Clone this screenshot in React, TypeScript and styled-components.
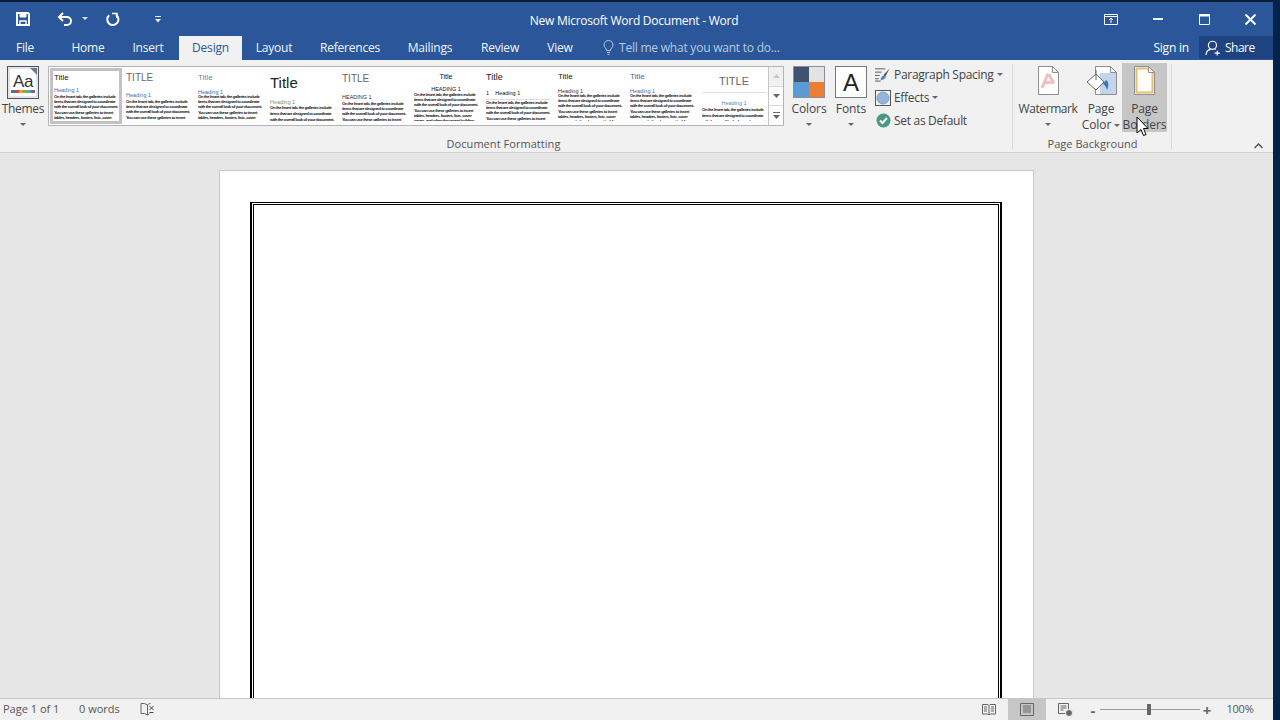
import styled, { createGlobalStyle } from 'styled-components';

const GlobalStyle = createGlobalStyle`
  html, body { margin: 0; padding: 0; background: #04234a; }
  body { font-family: "Open Sans", "Noto Sans", sans-serif; overflow: hidden; }
`;

const Desktop = styled.div`
  width: 1280px;
  height: 720px;
  display: flex;
  overflow: hidden;
  position: relative;
  background: #04234a;
`;

const Window = styled.div`
  width: 1273px;
  height: 720px;
  display: flex;
  flex-direction: column;
  border-top: 2px solid #0b1c38;
  box-sizing: border-box;
`;

const TitleBar = styled.div`
  height: 34px;
  flex: none;
  background: #2b579a;
  display: flex;
  align-items: center;
  color: #fff;
  position: relative;
`;

const Qat = styled.div`
  display: flex;
  align-items: center;
  box-sizing: border-box;
  padding-left: 15px;
  height: 100%;
  width: 500px;
`;

const QatSlot = styled.span<{ $w: number }>`
  display: flex;
  align-items: center;
  width: ${p => p.$w}px;
`;

const DocTitle = styled.div`
  flex: none;
  width: 268px;
  text-align: center;
  font-size: 12px;
  letter-spacing: -0.25px;
  margin-top: 3px;
`;

const WinControls = styled.div`
  margin-left: auto;
  display: flex;
  align-items: center;
  height: 100%;
`;

const WinSlot = styled.span<{ $w: number }>`
  width: ${p => p.$w}px;
  display: flex;
  justify-content: center;
`;

const TabBar = styled.div`
  height: 24px;
  flex: none;
  background: #2b579a;
  display: flex;
  align-items: stretch;
  color: #fff;
  font-size: 12px;
`;

const Tab = styled.div<{ $active?: boolean; $w: number; $ml?: number }>`
  width: ${p => p.$w}px;
  margin-left: ${p => p.$ml ?? 0}px;
  padding-bottom: 1px;
  box-sizing: border-box;
  display: flex;
  justify-content: center;
  align-items: center;
  letter-spacing: -0.2px;
  background: ${p => (p.$active ? '#f1f1f1' : 'transparent')};
  color: ${p => (p.$active ? '#2b579a' : '#f2f5fa')};
`;

const TellMe = styled.div`
  display: flex;
  align-items: center;
  gap: 5px;
  margin-left: 18px;
  padding-bottom: 1px;
  color: #b7c9e3;
  font-size: 12px;
  letter-spacing: -0.22px;
`;

const SignIn = styled.div`
  margin-left: auto;
  display: flex;
  align-items: center;
  margin-right: 10px;
  padding-bottom: 1px;
  letter-spacing: -0.2px;
`;

const ShareButton = styled.div`
  width: 74px;
  box-sizing: border-box;
  padding-left: 6px;
  display: flex;
  align-items: center;
  gap: 4px;
  background: #1e4380;
  letter-spacing: -0.5px;
  margin-bottom: 1px;
`;

const Ribbon = styled.div`
  height: 93px;
  flex: none;
  background: #f1f1f1;
  border-bottom: 1px solid #d0d0d0;
  box-sizing: border-box;
  display: flex;
  color: #444;
  font-size: 12px;
`;

const Group = styled.div<{ $w: number }>`
  width: ${p => p.$w}px;
  flex: none;
  display: flex;
  flex-direction: column;
  position: relative;
  &::after {
    content: '';
    position: absolute;
    right: 0;
    top: 4px;
    bottom: 3px;
    width: 1px;
    background: #dadada;
  }
`;

const GroupBody = styled.div`
  height: 76px;
  display: flex;
  flex: none;
`;

const GroupLabel = styled.div<{ $pr?: number }>`
  text-align: center;
  font-size: 11px;
  color: #555;
  padding-right: ${p => p.$pr ?? 0}px;
  letter-spacing: 0.05px;
  line-height: 15px;
`;

const Large = styled.div<{ $w: number; $ml?: number; $hot?: boolean; $ls?: number }>`
  width: ${p => p.$w}px;
  margin-left: ${p => p.$ml ?? 0}px;
  margin-top: 3px;
  height: 69px;
  flex: none;
  display: flex;
  flex-direction: column;
  align-items: center;
  background: ${p => (p.$hot ? '#c6c6c6' : 'transparent')};
  line-height: 16px;
  text-align: center;
  white-space: nowrap;
  letter-spacing: ${p => p.$ls ?? -0.1}px;
`;

const IconBox = styled.div`
  height: 35px;
  margin-top: 3px;
  display: flex;
  align-items: flex-start;
  justify-content: center;
  flex: none;
`;

const Caret = styled.span`
  display: inline-block;
  width: 0;
  height: 0;
  border-left: 3px solid transparent;
  border-right: 3px solid transparent;
  border-top: 3px solid #666;
  vertical-align: middle;
`;

const CaretRow = styled.div`
  height: 16px;
  display: flex;
  align-items: center;
  justify-content: center;
`;

const Gallery = styled.div`
  width: 736px;
  height: 60px;
  margin: 6px 0 0 2px;
  flex: none;
  display: flex;
  background: #fff;
  border: 1px solid #b4b4b4;
  box-sizing: border-box;
`;

const Thumbs = styled.div`
  display: flex;
  flex: 1;
  padding-left: 1px;
  overflow: hidden;
`;

const Thumb = styled.div<{ $selected?: boolean; $top: number; $align: string }>`
  width: 72px;
  flex: none;
  height: 56px;
  margin-top: 1px;
  box-sizing: border-box;
  border: 3px solid ${p => (p.$selected ? '#c2c2c2' : 'transparent')};
  padding: ${p => p.$top}px 1px 0 1px;
  overflow: hidden;
  color: #222;
  text-align: ${p => p.$align};
`;

const ThumbTitle = styled.div<{ $size: number; $color: string; $h: number }>`
  font-family: "Liberation Sans", sans-serif;
  font-size: ${p => p.$size}px;
  color: ${p => p.$color};
  height: ${p => p.$h}px;
  line-height: ${p => p.$size + 2}px;
`;

const ThumbHeading = styled.div<{ $color: string; $h: number; $rule?: 'top' | 'bottom' }>`
  font-family: "Liberation Sans", sans-serif;
  font-size: 5.5px;
  color: ${p => p.$color};
  height: ${p => p.$h}px;
  line-height: 6px;
  box-sizing: border-box;
  white-space: pre;
  ${p => p.$rule === 'top' && 'border-top: 1px solid #ddd; padding-top: 7px;'}
  ${p => p.$rule === 'bottom' && 'border-bottom: 1px solid #ddd;'}
`;

const ThumbBody = styled.div<{ $lh?: number }>`
  font-family: "Liberation Sans", sans-serif;
  font-size: 4.2px;
  font-weight: 700;
  letter-spacing: -0.36px;
  line-height: ${p => p.$lh ?? 5.2}px;
  color: #111;
  text-align: left;
`;

const Scroller = styled.div`
  width: 14px;
  flex: none;
  display: flex;
  flex-direction: column;
  border-left: 1px solid #c6c6c6;
`;

const ScrollBtn = styled.div<{ $off?: boolean }>`
  flex: 1;
  display: flex;
  align-items: center;
  justify-content: center;
  background: ${p => (p.$off ? '#f1f1f1' : '#fff')};
  & + & { border-top: 1px solid #d8d8d8; }
`;

const SmallStack = styled.div`
  margin: 0 0 0 3px;
  padding-top: 3px;
  display: flex;
  flex-direction: column;
  flex: none;
`;

const SmallBtn = styled.div`
  height: 23px;
  display: flex;
  align-items: center;
  gap: 3px;
  white-space: nowrap;
  letter-spacing: -0.3px;
`;

const SmallIcon = styled.span`
  width: 16px;
  display: flex;
  justify-content: center;
`;

const Collapse = styled.div`
  margin-left: auto;
  align-self: flex-end;
  margin-right: 10px;
  margin-bottom: 3px;
  display: flex;
`;

const Workspace = styled.div`
  flex: 1;
  min-height: 0;
  background: #e6e6e6;
  overflow: hidden;
  padding: 17px 20px 0 0;
  display: flex;
  justify-content: center;
  box-sizing: border-box;
`;

const Page = styled.div`
  width: 815px;
  height: 800px;
  flex: none;
  box-sizing: border-box;
  background: #fff;
  border: 1px solid #c9c9c9;
  padding: 31px 31px 0 30px;
`;

const BorderOuter = styled.div`
  height: 100%;
  box-sizing: border-box;
  border-style: solid;
  border-color: #000;
  border-width: 1px 2px;
  padding: 1px;
`;

const BorderInner = styled.div`
  height: 100%;
  box-sizing: border-box;
  border: 1px solid #000;
`;

const StatusBar = styled.div`
  height: 22px;
  flex: none;
  box-sizing: border-box;
  background: #f1f1f1;
  border-top: 1px solid #c6c6c6;
  display: flex;
  align-items: stretch;
  color: #555;
  font-size: 11px;
`;

const StatusText = styled.div<{ $w: number; $ml?: number }>`
  width: ${p => p.$w}px;
  margin-left: ${p => p.$ml ?? 0}px;
  display: flex;
  align-items: center;
  white-space: nowrap;
  padding-bottom: 2px;
`;

const StatusRight = styled.div`
  margin-left: auto;
  display: flex;
  align-items: stretch;
`;

const ViewBtn = styled.div<{ $active?: boolean }>`
  width: 38px;
  display: flex;
  align-items: center;
  justify-content: center;
  background: ${p => (p.$active ? '#c6c6c6' : 'transparent')};
`;

const Zoom = styled.div`
  display: flex;
  align-items: center;
  margin-left: 2px;
`;

const ZoomSign = styled.span`
  width: 14px;
  text-align: center;
  font-size: 15px;
  font-weight: 700;
  color: #666;
  line-height: 14px;
`;

const Slider = styled.div`
  width: 100px;
  height: 1px;
  background: #9a9a9a;
  position: relative;
`;

const SliderThumb = styled.span`
  position: absolute;
  left: 47px;
  top: -5px;
  width: 4px;
  height: 11px;
  background: #666;
`;

const ZoomValue = styled.div`
  width: 52px;
  text-align: center;
  letter-spacing: -0.2px;
  margin-right: 7px;
  padding-bottom: 2px;
`;

const Cursor = styled.svg`
  position: absolute;
  left: 1136px;
  top: 116px;
`;

const BODY =
  'On the Insert tab, the galleries include items that are designed to coordinate with the overall look of your document. You can use these galleries to insert tables, headers, footers, lists, cover pages, and other document building blocks.';

type ThumbDef = {
  title: string;
  size: number;
  color: string;
  top: number;
  titleH: number;
  heading: string;
  headColor: string;
  headH: number;
  align?: string;
  rule?: 'top' | 'bottom';
  bodyLh?: number;
};

const thumbs: ThumbDef[] = [
  { title: 'Title', size: 8, color: '#222', top: 2, titleH: 14, heading: 'Heading 1', headColor: '#3a6fb0', headH: 7 },
  { title: 'TITLE', size: 10, color: '#666', top: 1, titleH: 20, heading: 'Heading 1', headColor: '#3a6fb0', headH: 7 },
  { title: 'Title', size: 8, color: '#6f8fb5', top: 2, titleH: 16, heading: 'Heading 1', headColor: '#3a6fb0', headH: 5 },
  { title: 'Title', size: 15, color: '#222', top: 3, titleH: 25, heading: 'Heading 1', headColor: '#6f9a6a', headH: 6, bodyLh: 5.8 },
  { title: 'TITLE', size: 10, color: '#666', top: 2, titleH: 21, heading: 'HEADING 1', headColor: '#333', headH: 7 },
  { title: 'Title', size: 7, color: '#111', top: 1, titleH: 14, heading: 'HEADING 1', headColor: '#111', headH: 6, align: 'center' },
  { title: 'Title', size: 9, color: '#222', top: 1, titleH: 18, heading: '1    Heading 1', headColor: '#111', headH: 10, rule: 'bottom' },
  { title: 'Title', size: 8, color: '#222', top: 1, titleH: 16, heading: 'Heading 1', headColor: '#333', headH: 5 },
  { title: 'Title', size: 8, color: '#3a6fb0', top: 1, titleH: 16, heading: 'Heading 1', headColor: '#3a6fb0', headH: 5 },
  { title: 'TITLE', size: 11, color: '#666', top: 4, titleH: 17, heading: 'Heading 1', headColor: '#5b86b8', headH: 15, align: 'center', rule: 'top', bodyLh: 5.8 },
];

function SaveIcon() {
  return (
    <svg width="16" height="16" viewBox="0 0 16 16" fill="none" stroke="#fff" strokeWidth="2">
      <path d="M2 2h11l1 1v11H2z" />
      <path d="M5 2v4h6V2" strokeWidth="1" fill="#fff" />
      <path d="M5 14v-4h6v4" strokeWidth="1.4" />
    </svg>
  );
}

function UndoIcon() {
  return (
    <svg width="16" height="14" viewBox="0 0 16 14" fill="none" stroke="#fff" strokeWidth="2">
      <path d="M6 1L2 5l4 4" />
      <path d="M2 5h8a3.6 3.6 0 0 1 0 8H7" />
    </svg>
  );
}

function RedoIcon() {
  return (
    <svg width="15" height="15" viewBox="0 0 15 15" fill="none" stroke="#fff" strokeWidth="2">
      <path d="M3.2 3.2A5.6 5.6 0 1 0 10 2.800" />
      <path d="M6 1.500h5v4.500" strokeWidth="1.600" />
    </svg>
  );
}

function WhiteCaret() {
  return (
    <svg width="6" height="4" viewBox="0 0 6 4">
      <path d="M0 0h6L3 3z" fill="#dfe7f3" />
    </svg>
  );
}

function CustomizeIcon() {
  return (
    <svg width="6" height="7" viewBox="0 0 6 7" fill="#e6ecf6">
      <rect x="0" y="0" width="6" height="1" />
      <path d="M0 3h6L3 6.500z" />
    </svg>
  );
}

function Bulb() {
  return (
    <svg width="11" height="15" viewBox="0 0 11 15" fill="none" stroke="#b7c9e3" strokeWidth="1">
      <path d="M3.500 10.500C3.500 8 1 7.500 1 5a4.500 4.500 0 0 1 9 0c0 2.500-2.500 3-2.500 5.500z" />
      <path d="M4 12.500h3M4.500 14.500h2" />
    </svg>
  );
}

function ThemesIcon() {
  return (
    <svg width="32" height="33" viewBox="0 0 32 33">
      <rect x="0.5" y="0.5" width="31" height="32" fill="#fff" stroke="#4a5560" />
      <rect x="2" y="2" width="28" height="29" fill="#fff" stroke="#c5ccd4" />
      <path d="M23 2h7v7z" fill="#6d7a88" />
      <text x="16" y="21" textAnchor="middle" fontFamily="Liberation Sans" fontSize="17" fill="#333">Aa</text>
      <rect x="4" y="24" width="4" height="3" fill="#4f6f9f" />
      <rect x="8" y="24" width="4" height="3" fill="#c0504d" />
      <rect x="12" y="24" width="4" height="3" fill="#e0a030" />
      <rect x="16" y="24" width="4" height="3" fill="#88a84a" />
      <rect x="20" y="24" width="4" height="3" fill="#5aa0c0" />
      <rect x="24" y="24" width="4" height="3" fill="#7a5fa0" />
    </svg>
  );
}

function ColorsIcon() {
  return (
    <svg width="32" height="32" viewBox="0 0 32 32">
      <rect x="0" y="0" width="16" height="16" fill="#3f5371" />
      <rect x="16" y="0" width="16" height="16" fill="#e3e3e3" />
      <rect x="0" y="16" width="16" height="16" fill="#5a9bd5" />
      <rect x="16" y="16" width="16" height="16" fill="#ed7d31" />
      <rect x="0.5" y="0.5" width="31" height="31" fill="none" stroke="#8a8f96" />
    </svg>
  );
}

function FontsIcon() {
  return (
    <svg width="32" height="32" viewBox="0 0 32 32">
      <rect x="0.5" y="0.5" width="31" height="31" fill="#fff" stroke="#777" />
      <text x="16" y="25" textAnchor="middle" fontFamily="Liberation Sans" fontSize="24" fill="#222">A</text>
    </svg>
  );
}

function ParaIcon() {
  return (
    <svg width="17" height="15" viewBox="0 0 17 15" fill="none">
      <path d="M0 1.500h11M0 5h7M0 8.500h5M0 12h4M0 14.500h6" stroke="#555" />
      <path d="M15.500 1L9 8l2 2z" fill="#555" />
      <path d="M9 8.500c-2 .5-3 2.500-3 5 2.500 0 5-1 5.500-3.500z" fill="#4d86c0" />
    </svg>
  );
}

function EffectsIcon() {
  return (
    <svg width="16" height="16" viewBox="0 0 16 16">
      <rect x="0.5" y="0.5" width="15" height="15" fill="#f4f4f4" stroke="#555" />
      <circle cx="8" cy="8" r="6" fill="#94b6de" stroke="#7c9cc5" />
    </svg>
  );
}

function DefaultIcon() {
  return (
    <svg width="15" height="15" viewBox="0 0 15 15">
      <circle cx="7.500" cy="7.500" r="7" fill="#4a9a83" />
      <path d="M4 7.500l2.500 2.500L11 5" fill="none" stroke="#fff" strokeWidth="2" />
    </svg>
  );
}

function Sheet({ children }: { children?: React.ReactNode }) {
  return (
    <svg width="21" height="29" viewBox="0 0 21 29">
      <path d="M.5.500h14l6 6v22H.5z" fill="#fff" stroke="#8e8e8e" />
      {children}
      <path d="M14.500.500v6h6z" fill="#f4f4f4" stroke="#8e8e8e" />
    </svg>
  );
}

function WatermarkIcon() {
  return (
    <Sheet>
      <path d="M4 22L9.500 9l2 .5 4.500 8M6.500 17l8-1" fill="none" stroke="#efc0c0" strokeWidth="3" />
    </Sheet>
  );
}

function PageColorIcon() {
  return (
    <svg width="31" height="29" viewBox="0 0 31 29">
      <path d="M9.500.500h15l6 6v22h-21z" fill="#fff" stroke="#8e8e8e" />
      <rect x="14" y="7" width="16" height="21" fill="#c3d5ea" />
      <path d="M24.500.500v6h6z" fill="#f4f4f4" stroke="#8e8e8e" />
      <path d="M1 16l9-8 8 8-8 8z" fill="#fff" stroke="#666" />
      <path d="M10 4v10" stroke="#666" />
      <path d="M20 14c3 2 3 6 1 10-1-3-2-5-4-6z" fill="#3d78b5" />
    </svg>
  );
}

function PageBordersIcon() {
  return (
    <Sheet>
      <path d="M2.500 2.500h11.500l4.500 4.500v19.500H2.500z" fill="#fffdf6" stroke="#e3c078" strokeWidth="2" />
    </Sheet>
  );
}

function ReadIcon() {
  return (
    <svg width="14" height="13" viewBox="0 0 14 13" fill="none" stroke="#666">
      <path d="M.5 1.500h5.500l1 1 1-1h5.500v9.500H8l-1 1-1-1H.5zM7 2.500v9" />
      <path d="M2 4h3M2 6h3M2 8h3M9 4h3M9 6h3M9 8h3" />
    </svg>
  );
}

function PrintIcon() {
  return (
    <svg width="14" height="13" viewBox="0 0 14 13" fill="none" stroke="#666">
      <path d="M.5.500h13v12H.5z" />
      <path d="M3 3h8M3 5h8M3 7h8M3 9h8" />
    </svg>
  );
}

function WebIcon() {
  return (
    <svg width="15" height="14" viewBox="0 0 15 14" fill="none" stroke="#666">
      <path d="M.5.500h10v10H.5z" />
      <path d="M2.500 3h6M2.500 5h6M2.500 7h3" />
      <circle cx="11" cy="10" r="3.500" fill="#666" stroke="#f1f1f1" />
    </svg>
  );
}

function ProofIcon() {
  return (
    <svg width="15" height="14" viewBox="0 0 15 14" fill="none" stroke="#666">
      <path d="M1 1.500h3.500l3 1.500v10l-3-1.500H1z" />
      <path d="M7.500 3c1-1 2-1.500 3-1.500M7.500 13l2-1.500" />
      <path d="M9.500 4l4 4M13.500 4l-4 4M9.500 10.500h4" stroke="#444" />
    </svg>
  );
}

export default function App() {
  return (
    <Desktop>
      <GlobalStyle />
      <Window>
        <TitleBar>
          <Qat>
            <QatSlot $w={42}><SaveIcon /></QatSlot>
            <QatSlot $w={25}><UndoIcon /></QatSlot>
            <QatSlot $w={24}><WhiteCaret /></QatSlot>
            <QatSlot $w={49}><RedoIcon /></QatSlot>
            <QatSlot $w={10}><CustomizeIcon /></QatSlot>
          </Qat>
          <DocTitle>New Microsoft Word Document - Word</DocTitle>
          <WinControls>
            <WinSlot $w={46}>
              <svg width="14" height="11" viewBox="0 0 14 11" fill="none" stroke="#fff">
                <path d="M.5.500h13v10H.5zM.5 2.500h13M7 9V4.500M5 6l2-2 2 2" />
              </svg>
            </WinSlot>
            <WinSlot $w={47}>
              <svg width="10" height="2" viewBox="0 0 10 2"><rect width="10" height="2" fill="#fff" /></svg>
            </WinSlot>
            <WinSlot $w={46}>
              <svg width="11" height="11" viewBox="0 0 11 11" fill="none" stroke="#fff">
                <path d="M.5.500h10v10H.5z" /><path d="M0 1.500h11" strokeWidth="2" />
              </svg>
            </WinSlot>
            <WinSlot $w={46}>
              <svg width="11" height="11" viewBox="0 0 11 11" fill="none" stroke="#fff" strokeWidth="2">
                <path d="M.5.500l10 10M10.500.500l-10 10" />
              </svg>
            </WinSlot>
          </WinControls>
        </TitleBar>
        <TabBar>
          <Tab $w={50}>File</Tab>
          <Tab $w={50} $ml={13}>Home</Tab>
          <Tab $w={50} $ml={10}>Insert</Tab>
          <Tab $w={63} $ml={6} $active>Design</Tab>
          <Tab $w={50} $ml={7}>Layout</Tab>
          <Tab $w={80} $ml={11}>References</Tab>
          <Tab $w={70} $ml={5}>Mailings</Tab>
          <Tab $w={50} $ml={10}>Review</Tab>
          <Tab $w={50} $ml={10}>View</Tab>
          <TellMe><Bulb />Tell me what you want to do...</TellMe>
          <SignIn>Sign in</SignIn>
          <ShareButton>
            <svg width="16" height="16" viewBox="0 0 15 15" fill="none" stroke="#fff" strokeWidth="1.100">
              <circle cx="7" cy="5" r="3.800" />
              <path d="M1 14c0-3 2-5 4.500-5.500M9 8.500l1 .5M11.500 10v4.500M9 12.300h5" />
            </svg>
            Share
          </ShareButton>
        </TabBar>
        <Ribbon>
          <Group $w={1013}>
            <GroupBody>
              <Large $w={46} $ls={-0.3}>
                <IconBox><ThemesIcon /></IconBox>
                Themes
                <CaretRow><Caret /></CaretRow>
              </Large>
              <Gallery>
                <Thumbs>
                  {thumbs.map((t, i) => (
                    <Thumb key={i} $selected={i === 0} $top={t.top} $align={t.align ?? 'left'}>
                      <ThumbTitle $size={t.size} $color={t.color} $h={t.titleH}>{t.title}</ThumbTitle>
                      <ThumbHeading $color={t.headColor} $h={t.headH} $rule={t.rule}>{t.heading}</ThumbHeading>
                      <ThumbBody $lh={t.bodyLh}>{BODY}</ThumbBody>
                    </Thumb>
                  ))}
                </Thumbs>
                <Scroller>
                  <ScrollBtn $off>
                    <svg width="7" height="4" viewBox="0 0 7 4"><path d="M0 4h7L3.500 0z" fill="#c6c6c6" /></svg>
                  </ScrollBtn>
                  <ScrollBtn>
                    <svg width="7" height="4" viewBox="0 0 7 4"><path d="M0 0h7L3.500 4z" fill="#666" /></svg>
                  </ScrollBtn>
                  <ScrollBtn>
                    <svg width="7" height="7" viewBox="0 0 7 7" fill="#666">
                      <rect width="7" height="1" /><path d="M0 3h7L3.500 7z" />
                    </svg>
                  </ScrollBtn>
                </Scroller>
              </Gallery>
              <Large $w={42} $ml={4}>
                <IconBox><ColorsIcon /></IconBox>
                Colors
                <CaretRow><Caret /></CaretRow>
              </Large>
              <Large $w={42}>
                <IconBox><FontsIcon /></IconBox>
                Fonts
                <CaretRow><Caret /></CaretRow>
              </Large>
              <SmallStack>
                <SmallBtn><SmallIcon><ParaIcon /></SmallIcon>Paragraph Spacing <Caret /></SmallBtn>
                <SmallBtn><SmallIcon><EffectsIcon /></SmallIcon>Effects <Caret /></SmallBtn>
                <SmallBtn><SmallIcon><DefaultIcon /></SmallIcon>Set as Default</SmallBtn>
              </SmallStack>
            </GroupBody>
            <GroupLabel $pr={6}>Document Formatting</GroupLabel>
          </Group>
          <Group $w={159}>
            <GroupBody>
              <Large $w={66} $ml={2} $ls={-0.4}>
                <IconBox><WatermarkIcon /></IconBox>
                Watermark
                <CaretRow><Caret /></CaretRow>
              </Large>
              <Large $w={40}>
                <IconBox><PageColorIcon /></IconBox>
                Page
                <span>Color <Caret /></span>
              </Large>
              <Large $w={45} $hot $ml={1}>
                <IconBox><PageBordersIcon /></IconBox>
                Page
                <span>Borders</span>
              </Large>
            </GroupBody>
            <GroupLabel>Page Background</GroupLabel>
          </Group>
          <Collapse>
            <svg width="9" height="6" viewBox="0 0 9 6" fill="none" stroke="#555" strokeWidth="1.500">
              <path d="M.5 5l4-4 4 4" />
            </svg>
          </Collapse>
        </Ribbon>
        <Workspace>
          <Page>
            <BorderOuter>
              <BorderInner />
            </BorderOuter>
          </Page>
        </Workspace>
        <StatusBar>
          <StatusText $w={76} $ml={3}>Page 1 of 1</StatusText>
          <StatusText $w={61}>0 words</StatusText>
          <StatusText $w={20}><ProofIcon /></StatusText>
          <StatusRight>
            <ViewBtn><ReadIcon /></ViewBtn>
            <ViewBtn $active><PrintIcon /></ViewBtn>
            <ViewBtn><WebIcon /></ViewBtn>
            <Zoom>
              <ZoomSign>-</ZoomSign>
              <Slider><SliderThumb /></Slider>
              <ZoomSign>+</ZoomSign>
              <ZoomValue>100%</ZoomValue>
            </Zoom>
          </StatusRight>
        </StatusBar>
      </Window>
      <Cursor width="13" height="21" viewBox="0 0 13 21">
        <path d="M1 1v16l4-3.500 2.500 6 2.500-1-2.500-6H12z" fill="#fff" stroke="#000" />
      </Cursor>
    </Desktop>
  );
}
